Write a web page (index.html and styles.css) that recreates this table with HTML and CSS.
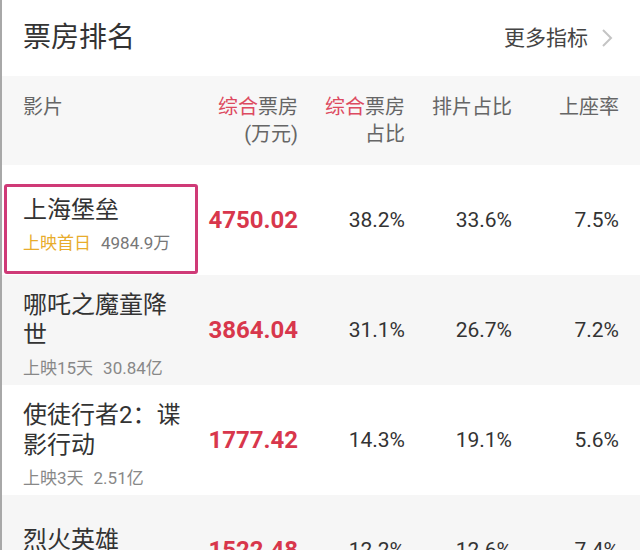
FILE: index.html
```html
<!DOCTYPE html>
<html lang="zh">
<head>
<meta charset="utf-8">
<link rel="stylesheet" href="styles.css">
</head>
<body>
<div class="page">
  <div class="topbar">
    <div class="title">票房排名</div>
    <div class="more">更多指标
      <svg class="chev" width="12" height="20" viewBox="0 0 12 20"><polyline points="2,2 10,10 2,18" fill="none" stroke="#c4c4c4" stroke-width="2"/></svg>
    </div>
  </div>
  <div class="grid head">
    <div class="hcell left">影片</div>
    <div class="hcell"><span class="hl">综合</span>票房<br>(万元)</div>
    <div class="hcell"><span class="hl">综合</span>票房<br>占比</div>
    <div class="hcell">排片占比</div>
    <div class="hcell">上座率</div>
  </div>

  <div class="grid row">
    <div class="name marked">
      <div class="mtitle">上海堡垒</div>
      <div class="sub"><span class="gold">上映首日</span><span class="val">4984.9万</span></div>
      <div class="markbox"></div>
    </div>
    <div class="num">4750.02</div>
    <div class="pct">38.2%</div>
    <div class="pct">33.6%</div>
    <div class="pct">7.5%</div>
  </div>

  <div class="grid row alt">
    <div class="name">
      <div class="mtitle">哪吒之魔童降世</div>
      <div class="sub"><span>上映15天</span><span class="val">30.84亿</span></div>
    </div>
    <div class="num">3864.04</div>
    <div class="pct">31.1%</div>
    <div class="pct">26.7%</div>
    <div class="pct">7.2%</div>
  </div>

  <div class="grid row">
    <div class="name">
      <div class="mtitle">使徒行者2：谍影行动</div>
      <div class="sub"><span>上映3天</span><span class="val">2.51亿</span></div>
    </div>
    <div class="num">1777.42</div>
    <div class="pct">14.3%</div>
    <div class="pct">19.1%</div>
    <div class="pct">5.6%</div>
  </div>

  <div class="grid row alt">
    <div class="name">
      <div class="mtitle">烈火英雄</div>
      <div class="sub"><span>上映3天</span><span class="val">2.18亿</span></div>
    </div>
    <div class="num">1522.48</div>
    <div class="pct">12.2%</div>
    <div class="pct">12.6%</div>
    <div class="pct">7.4%</div>
  </div>
</div>
</body>
</html>
```

FILE: styles.css
```css
html, body {
  margin: 0;
  padding: 0;
  background: #ffffff;
}
body {
  font-family: Roboto, "Noto Sans CJK SC", sans-serif;
  color: #333;
  overflow: hidden;
}
.page {
  border-left: 2px solid #a8a8a8;
  min-height: 550px;
}
.topbar {
  height: 76px;
  display: flex;
  align-items: center;
  justify-content: space-between;
  padding: 0 27px 0 21px;
}
.title {
  font-size: 28px;
  color: #333;
  line-height: 1;
}
.more {
  display: flex;
  align-items: center;
  gap: 13px;
  font-size: 21px;
  color: #444;
  line-height: 1;
}
.chev {
  display: block;
}
.grid {
  display: grid;
  grid-template-columns: 168px repeat(4, 107px);
  padding: 0 21px 0 21px;
}
.head {
  background: #f7f7f7;
  height: 89px;
  box-sizing: border-box;
  padding-top: 18px;
  font-size: 20px;
  line-height: 27px;
  color: #666;
}
.hcell {
  text-align: right;
}
.hcell.left {
  text-align: left;
}
.hl {
  color: #dd4a60;
}
.row {
  height: 110px;
  align-items: center;
}
.row.alt {
  background: #f6f6f6;
}
.name {
  position: relative;
  padding-right: 6px;
  padding-top: 8px;
}
.mtitle {
  font-size: 24px;
  line-height: 30px;
  color: #333;
}
.sub {
  margin-top: 7px;
  font-size: 17px;
  line-height: 22px;
  color: #888;
  display: flex;
  gap: 10px;
}
.gold {
  color: #e8ac2c;
}
.marked .val {
  color: #777;
}
.markbox {
  position: absolute;
  left: -19px;
  right: -7px;
  top: -3px;
  bottom: -20px;
  border: 3px solid #cf3a77;
  border-radius: 3px;
}
.num {
  text-align: right;
  font-size: 24px;
  font-weight: 700;
  color: #d8374c;
}
.pct {
  text-align: right;
  font-size: 21px;
  color: #333;
}
```
